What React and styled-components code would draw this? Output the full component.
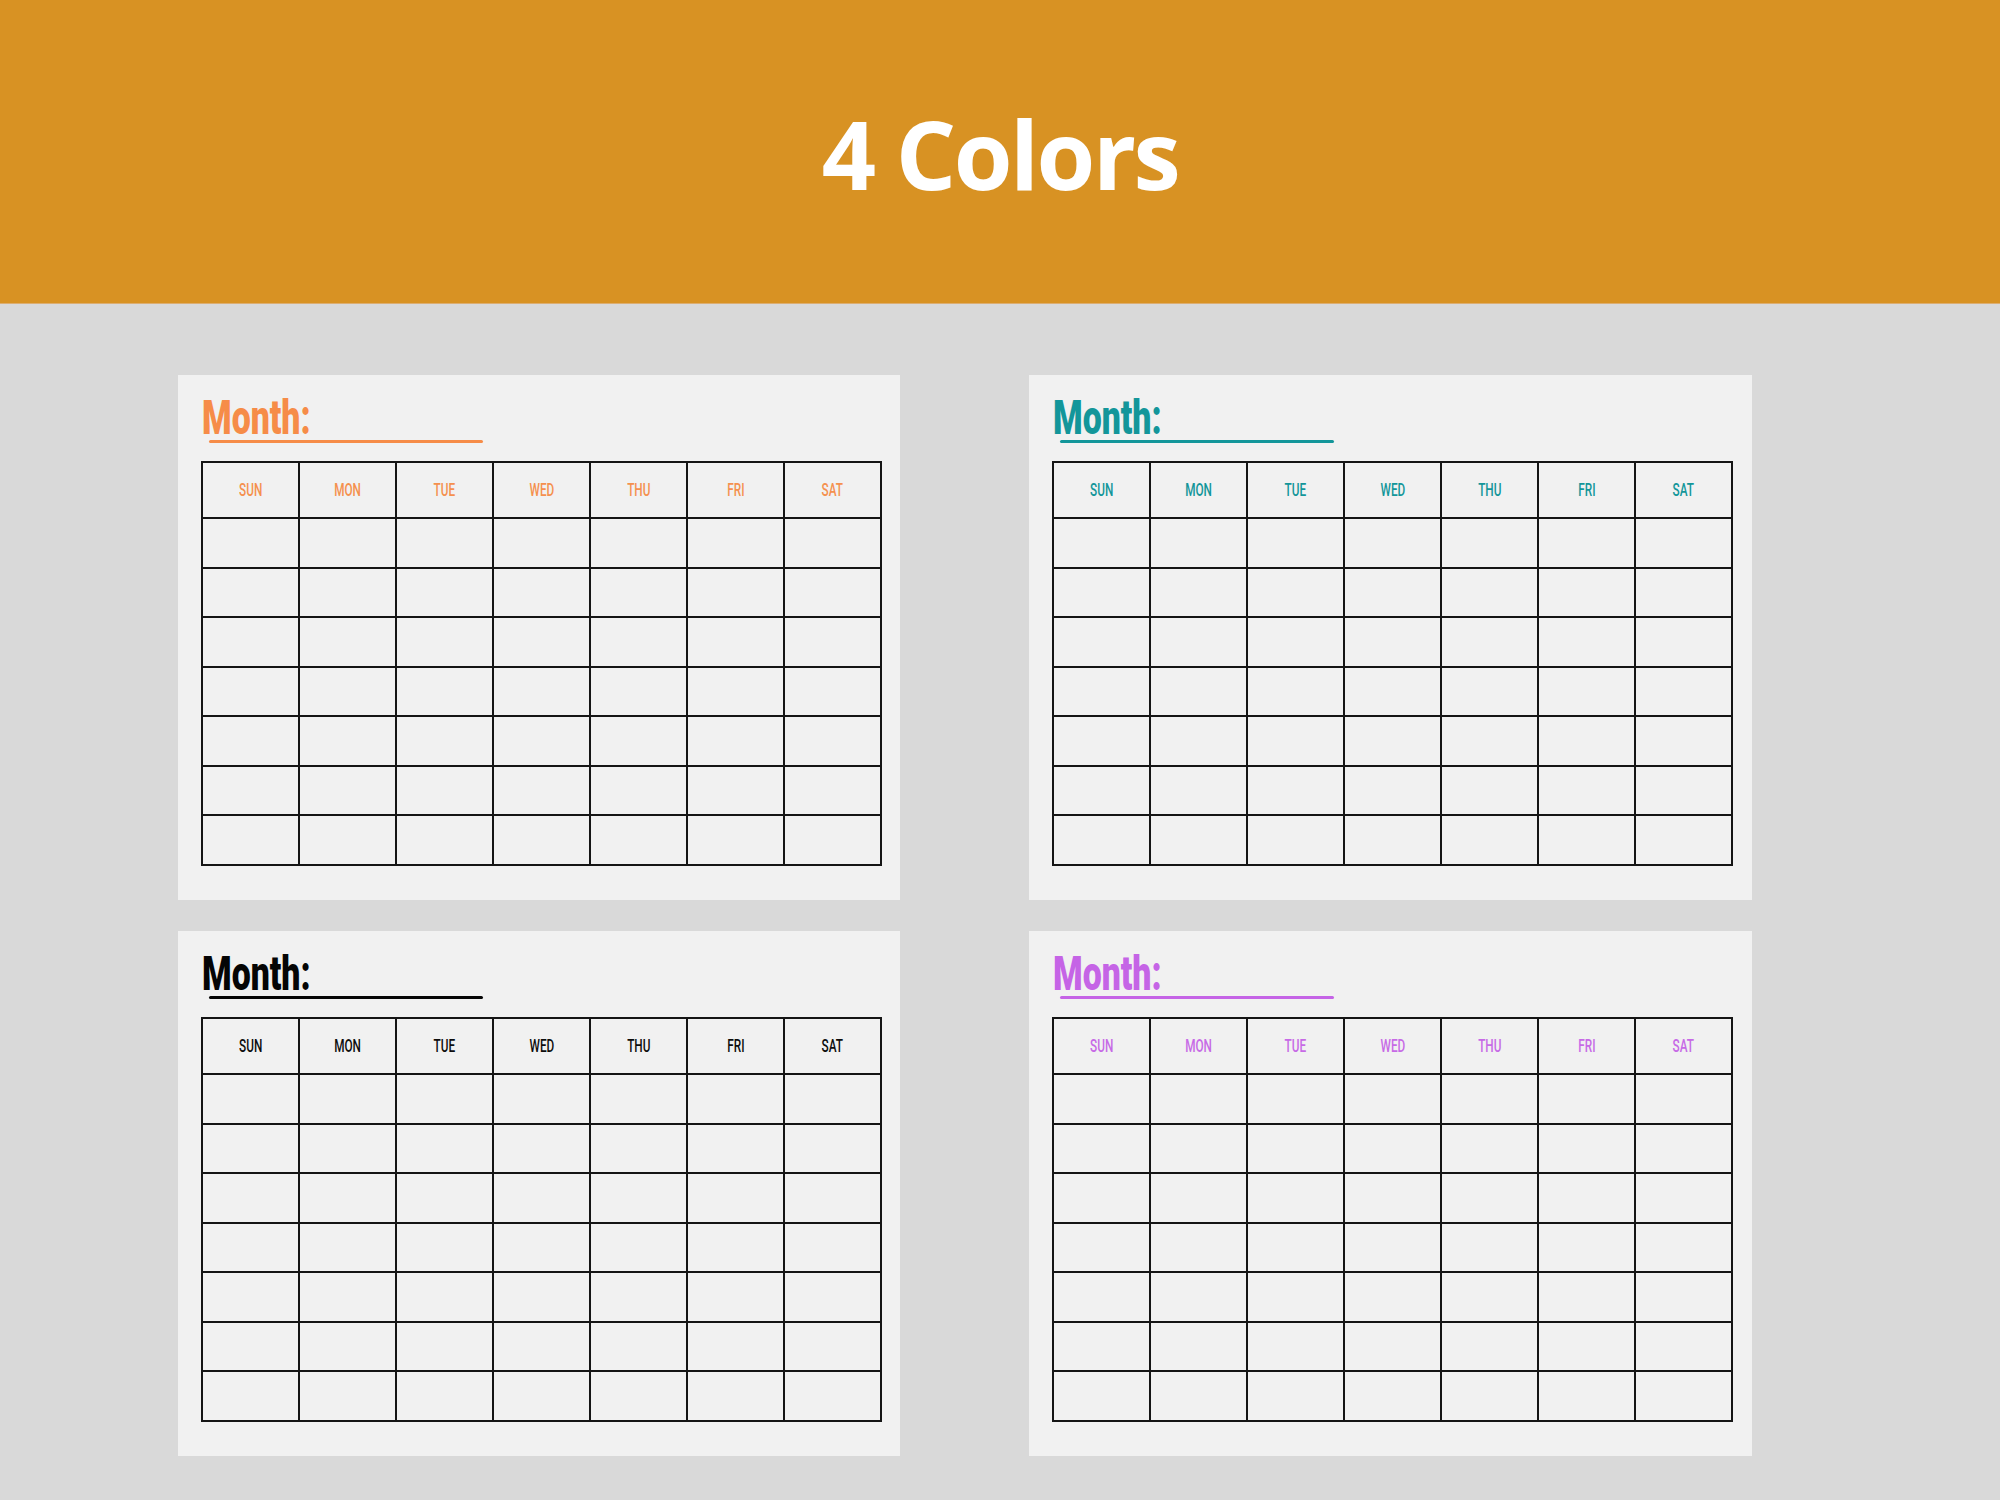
import React from "react";
import styled, { createGlobalStyle } from "styled-components";

const Global = createGlobalStyle`
  html, body { margin: 0; padding: 0; background: #d9d9d9; }
  body { font-family: "Open Sans", "Liberation Sans", sans-serif; }
  * { box-sizing: border-box; }
`;

const Page = styled.div`
  width: 2000px;
  min-height: 1500px;
  background: #d9d9d9;
`;

const Banner = styled.header`
  height: 304px;
  background: #d89223;
  border-bottom: 1px solid #dcae72;
  display: flex;
  align-items: center;
  justify-content: center;
`;

const Title = styled.h1`
  margin: 0;
  padding-top: 4px;
  font-family: "Open Sans", "Liberation Sans", sans-serif;
  font-weight: 700;
  font-size: 95px;
  letter-spacing: -2.5px;
  color: #ffffff;
  line-height: 1;
`;

const Grid = styled.main`
  display: grid;
  grid-template-columns: 722px 723px;
  column-gap: 129px;
  row-gap: 31px;
  padding: 71px 0 0 178px;
`;

const Card = styled.section`
  background: #f1f1f1;
  height: 525px;
  padding: 22px 0 0 23px;
  display: flex;
  flex-direction: column;
`;

const Heading = styled.div`
  position: relative;
  height: 64px;
`;

const MonthText = styled.span`
  display: inline-block;
  font-family: Roboto, "Liberation Sans", sans-serif;
  font-weight: 900;
  font-size: 49px;
  line-height: 1;
  color: ${(p) => p.$color};
  transform: scaleX(0.69);
  transform-origin: left top;
  margin-left: 1px;
  margin-top: -4px;
`;

const Rule = styled.div`
  position: absolute;
  left: 8px;
  top: 43px;
  width: 274px;
  height: 3px;
  border-radius: 2px;
  background: ${(p) => p.$color};
`;

const Table = styled.div`
  width: 681px;
  display: grid;
  grid-template-columns: repeat(7, 1fr);
  grid-template-rows: 54px repeat(7, 47.5px);
  gap: 2px;
  padding: 2px;
  background: #151515;
`;

const DayCell = styled.div`
  background: #f1f1f1;
  display: flex;
  align-items: center;
  justify-content: center;
`;

const DayLabel = styled.span`
  display: inline-block;
  font-family: Roboto, "Liberation Sans", sans-serif;
  font-weight: 500;
  font-size: 19px;
  line-height: 1;
  color: ${(p) => p.$color};
  transform: scaleX(0.62);
  margin-top: -2px;
`;

const Cell = styled.div`
  background: #f1f1f1;
`;

const DAYS = ["SUN", "MON", "TUE", "WED", "THU", "FRI", "SAT"];

const VARIANTS = [
  { title: "#f68c48", day: "#f5904e", rule: "#f68c48" },
  { title: "#13969a", day: "#13969a", rule: "#13969a" },
  { title: "#050505", day: "#0d0d0d", rule: "#050505" },
  { title: "#c564e6", day: "#c76ae6", rule: "#c564e6" },
];

function Calendar({ v }) {
  return (
    <Card>
      <Heading>
        <MonthText $color={v.title}>Month:</MonthText>
        <Rule $color={v.rule} />
      </Heading>
      <Table>
        {DAYS.map((d) => (
          <DayCell key={d}>
            <DayLabel $color={v.day}>{d}</DayLabel>
          </DayCell>
        ))}
        {Array.from({ length: 49 }).map((_, i) => (
          <Cell key={i} />
        ))}
      </Table>
    </Card>
  );
}

export default function App() {
  return (
    <Page>
      <Global />
      <Banner>
        <Title>4 Colors</Title>
      </Banner>
      <Grid>
        {VARIANTS.map((v, i) => (
          <Calendar key={i} v={v} />
        ))}
      </Grid>
    </Page>
  );
}
